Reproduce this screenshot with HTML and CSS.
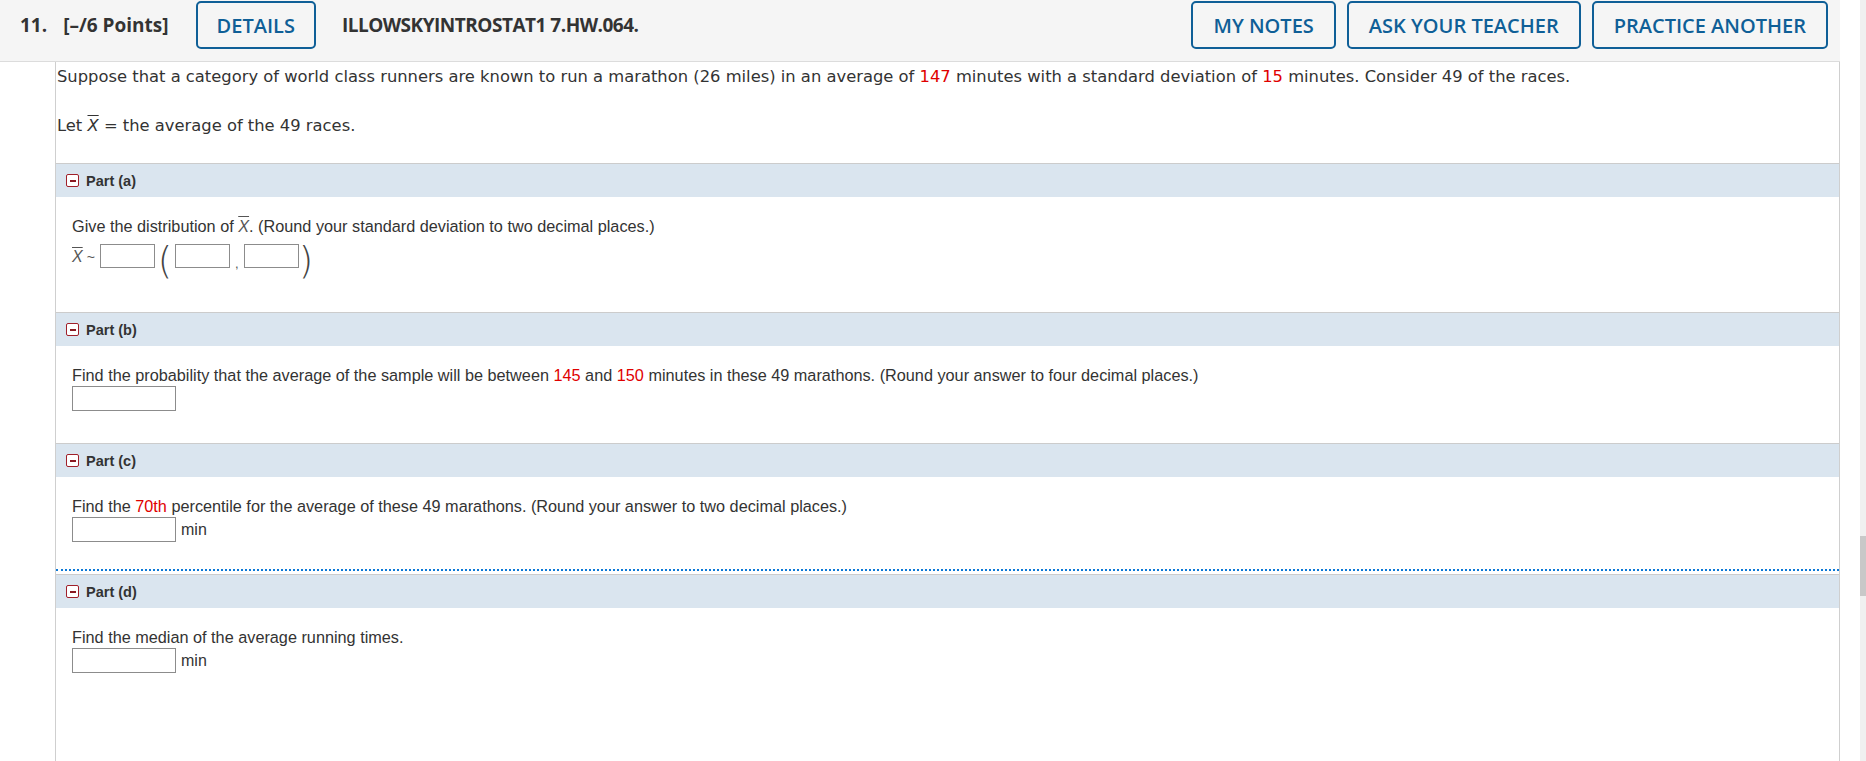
FILE: index.html
```html
<!DOCTYPE html>
<html lang="en">
<head>
<meta charset="utf-8">
<title>Question 11</title>
<link rel="stylesheet" href="styles.css">
</head>
<body>
<div class="page">
  <div class="main">
    <header class="qhead">
      <div class="qleft">
        <span class="qnum">11.</span>
        <span class="qpts">[–/6 Points]</span>
        <button class="btn btn-details">DETAILS</button>
        <span class="qid">ILLOWSKYINTROSTAT1 7.HW.064.</span>
      </div>
      <div class="qright">
        <button class="btn">MY NOTES</button>
        <button class="btn">ASK YOUR TEACHER</button>
        <button class="btn">PRACTICE ANOTHER</button>
      </div>
    </header>
    <section class="qbody">
      <div class="intro">
        <p class="intro-p">Suppose that a category of world class runners are known to run a marathon (26 miles) in an average of <span class="red">147</span> minutes with a standard deviation of <span class="red">15</span> minutes. Consider 49 of the races.</p>
        <p class="intro-p intro-let">Let <span class="xbar">X</span> = the average of the 49 races.</p>
      </div>

      <div class="part">
        <div class="part-head"><span class="toggle"></span><span class="part-title">Part (a)</span></div>
        <div class="part-body part-a">
          <div class="ptext">Give the distribution of <span class="xbar xbar-a">X</span>. (Round your standard deviation to two decimal places.)</div>
          <div class="dist-row">
            <span class="xbar xbar-a">X</span><span class="tilde">~</span>
            <span class="box box-s"></span>
            <span class="paren">(</span>
            <span class="box box-s"></span>
            <span class="comma">,</span>
            <span class="box box-s"></span>
            <span class="paren paren-r">)</span>
          </div>
        </div>
      </div>

      <div class="part">
        <div class="part-head"><span class="toggle"></span><span class="part-title">Part (b)</span></div>
        <div class="part-body part-b">
          <div class="ptext">Find the probability that the average of the sample will be between <span class="red">145</span> and <span class="red">150</span> minutes in these 49 marathons. (Round your answer to four decimal places.)</div>
          <div class="ans-row"><span class="box box-l"></span></div>
        </div>
      </div>

      <div class="part">
        <div class="part-head"><span class="toggle"></span><span class="part-title">Part (c)</span></div>
        <div class="part-body part-c">
          <div class="ptext">Find the <span class="red">70th</span> percentile for the average of these 49 marathons. (Round your answer to two decimal places.)</div>
          <div class="ans-row"><span class="box box-l"></span><span class="unit">min</span></div>
        </div>
        <div class="dotted"></div>
      </div>

      <div class="part">
        <div class="part-head"><span class="toggle"></span><span class="part-title">Part (d)</span></div>
        <div class="part-body part-d">
          <div class="ptext">Find the median of the average running times.</div>
          <div class="ans-row"><span class="box box-l"></span><span class="unit">min</span></div>
        </div>
      </div>
    </section>
  </div>
  <div class="scrollbar"><div class="thumb"></div></div>
</div>
</body>
</html>
```

FILE: styles.css
```css
* { box-sizing: border-box; }
html, body { margin: 0; padding: 0; background: #fff; }
body { height: 761px; overflow: hidden; }

.page {
  display: flex;
  height: 761px;
}
.main {
  width: 1840px;
  display: flex;
  flex-direction: column;
}
.scrollbar {
  margin-left: 20px;
  width: 6px;
  background: #f0f0f0;
  display: flex;
  flex-direction: column;
}
.thumb {
  margin-top: 536px;
  height: 60px;
  background: #c8c8c8;
}

/* header */
.qhead {
  height: 62px;
  background: #f5f5f5;
  border-bottom: 1px solid #dcdcdc;
  display: flex;
  justify-content: space-between;
  align-items: flex-start;
  padding: 1px 12px 0 20px;
  font-family: "Open Sans", "Liberation Sans", sans-serif;
  color: #333;
}
.qleft, .qright {
  display: flex;
  align-items: center;
  height: 48px;
}
.qnum { font-weight: 700; font-size: 19px; }
.qpts { font-weight: 700; font-size: 19px; margin-left: 16px; }
.qid { font-weight: 700; font-size: 19px; margin-left: 26px; letter-spacing: -0.5px; }
.btn {
  height: 48px;
  border: 2px solid #0f5f97;
  border-radius: 5px;
  background: transparent;
  color: #0f5f97;
  font-family: "Open Sans", "Liberation Sans", sans-serif;
  font-weight: 600;
  font-size: 20px;
  padding: 0 20px;
}
.btn-details { margin-left: 27px; padding: 0 19px; }
.qright { gap: 11px; }

/* body */
.qbody {
  flex: 1;
  margin-left: 55px;
  border-left: 1px solid #cfcfcf;
  border-right: 1px solid #cfcfcf;
  display: flex;
  flex-direction: column;
}
.intro {
  padding: 5px 2px 0 1px;
  font-family: "DejaVu Sans", Verdana, sans-serif;
  font-size: 16.35px;
  color: #333;
}
.intro-p { margin: 0; line-height: 20px; }
.intro-let { margin-top: 29px; padding-bottom: 27px; }
.red { color: #e00000; }
.xbar {
  font-style: italic;
  text-decoration: overline;
}

.part-head {
  height: 34px;
  border-top: 1px solid #cccccc;
  background: #dae5ef;
  display: flex;
  align-items: center;
  padding-left: 10px;
  gap: 7px;
}
.toggle {
  width: 13px;
  height: 13px;
  border: 1.5px solid #a0202a;
  border-radius: 2px;
  background: #fff;
  display: flex;
  align-items: center;
  justify-content: center;
}
.toggle::before {
  content: "";
  width: 6px;
  height: 2px;
  background: #8a1a22;
}
.part-title {
  font-family: "Liberation Sans", Arial, sans-serif;
  font-weight: 700;
  font-size: 14.5px;
  color: #333;
}
.part-body {
  padding: 20px 16px 0 16px;
  font-family: "Liberation Sans", Arial, sans-serif;
  font-size: 16.25px;
  color: #333;
}
.ptext { line-height: 18px; }
.part-a { padding-bottom: 36px; }
.part-b { padding-bottom: 32px; }
.part-c { padding-bottom: 27px; }
.part-d { padding-bottom: 0; }

.dist-row {
  margin-top: 5px;
  height: 36px;
  display: flex;
  align-items: flex-start;
  color: #555;
}
.xbar-a { color: #555; }
.dist-row .xbar { font-size: 16px; margin-top: 8px; }
.tilde { font-size: 14px; margin: 9px 5px 0 4px; }
.box {
  display: block;
  height: 24px;
  border: 1px solid #8c8c8c;
  background: #fff;
}
.dist-row .box { margin-top: 4px; }
.box-s { width: 55px; }
.box-l { width: 104px; height: 25px; }
.paren {
  width: 20px;
  text-align: center;
  font-family: "DejaVu Sans", sans-serif;
  font-weight: 200;
  font-size: 37px;
  line-height: 36px;
  color: #444;
  transform: translateY(4px);
}
.paren-r { width: 14px; }
.comma { width: 14px; text-align: center; font-size: 13px; margin-top: 16px; }

.ans-row {
  margin-top: 2px;
  display: flex;
  align-items: center;
}
.unit { margin-left: 5px; font-size: 16px; }

.dotted {
  height: 2px;
  border-top: 2px dotted #0b78d6;
  margin-bottom: 3px;
}
```
